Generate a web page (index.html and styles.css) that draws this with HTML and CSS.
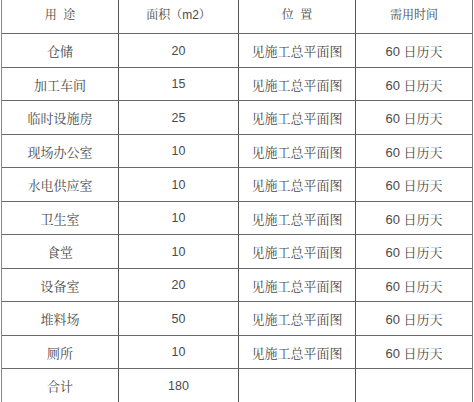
FILE: index.html
```html
<!DOCTYPE html>
<html lang="zh">
<head>
<meta charset="utf-8">
<link rel="stylesheet" href="styles.css">
</head>
<body>
<div class="sheet">
  <div class="row head tall"><div class="c">用&nbsp;&nbsp;途</div><div class="c">面积（m2）</div><div class="c">位&nbsp;&nbsp;置</div><div class="c">需用时间</div></div>
  <div class="row tall"><div class="c">仓储</div><div class="c num">20</div><div class="c">见施工总平面图</div><div class="c">60 日历天</div></div>
  <div class="row"><div class="c">加工车间</div><div class="c num">15</div><div class="c">见施工总平面图</div><div class="c">60 日历天</div></div>
  <div class="row tall"><div class="c">临时设施房</div><div class="c num">25</div><div class="c">见施工总平面图</div><div class="c">60 日历天</div></div>
  <div class="row"><div class="c">现场办公室</div><div class="c num">10</div><div class="c">见施工总平面图</div><div class="c">60 日历天</div></div>
  <div class="row tall"><div class="c">水电供应室</div><div class="c num">10</div><div class="c">见施工总平面图</div><div class="c">60 日历天</div></div>
  <div class="row"><div class="c">卫生室</div><div class="c num">10</div><div class="c">见施工总平面图</div><div class="c">60 日历天</div></div>
  <div class="row tall"><div class="c">食堂</div><div class="c num">10</div><div class="c">见施工总平面图</div><div class="c">60 日历天</div></div>
  <div class="row"><div class="c">设备室</div><div class="c num">20</div><div class="c">见施工总平面图</div><div class="c">60 日历天</div></div>
  <div class="row tall"><div class="c">堆料场</div><div class="c num">50</div><div class="c">见施工总平面图</div><div class="c">60 日历天</div></div>
  <div class="row"><div class="c">厕所</div><div class="c num">10</div><div class="c">见施工总平面图</div><div class="c">60 日历天</div></div>
  <div class="row tall"><div class="c">合计</div><div class="c num">180</div><div class="c"></div><div class="c"></div></div>
</div>
</body>
</html>
```
FILE: styles.css
```css
html, body {
  margin: 0;
  padding: 0;
  background: #ffffff;
}
body {
  font-family: "Liberation Sans", "Noto Serif CJK SC", "Noto Sans CJK SC", sans-serif;
  font-size: 13px;
  color: #4a4a4a;
}
.sheet {
  margin-left: 1px;
  width: 472px;
  border-left: 1px solid #8a8a8a;
  display: flex;
  flex-direction: column;
}
.row {
  display: grid;
  grid-template-columns: 117px 120px 117px 117px;
  height: 33px;
}
.row.tall {
  height: 34px;
}
.c {
  box-sizing: border-box;
  border-right: 1px solid #555555;
  border-bottom: 1px solid #6a6a6a;
  display: flex;
  align-items: center;
  justify-content: center;
  white-space: nowrap;
}
.row .c:last-child {
  border-right-color: #777777;
}
.head .c {
  font-size: 12px;
  padding-bottom: 6px;
}
.num {
  font-size: 12.5px;
}
```
